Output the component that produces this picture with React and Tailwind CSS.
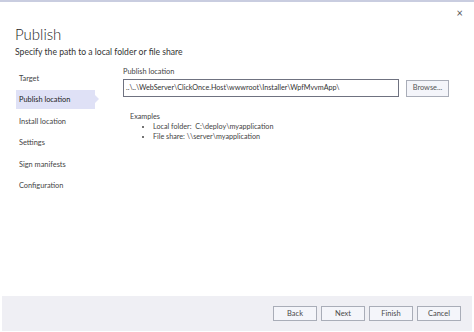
import React from 'react';

const navItems = ['Target', 'Publish location', 'Install location', 'Settings', 'Sign manifests', 'Configuration'];

const FooterButton = ({ children }) => (
  <button className="w-[44px] h-[15px] border border-[#a9adb8] bg-[#f4f5fa] text-[7.5px] leading-none text-[#4a4a4a]">
    {children}
  </button>
);

export default function App() {
  return (
    <div className="w-[474px] h-[332px] bg-white flex flex-col font-['Lato',sans-serif] text-[#333] overflow-hidden">
      <div className="h-[2px] bg-[#c9cde0]" />
      <div className="relative px-[15px] pt-[22px] h-[56px]">
        <span className="absolute right-[11px] top-[5px] text-[11px] leading-none text-[#555]">×</span>
        <h1 className="text-[15px] leading-[20px] font-light text-[#1e1e1e]">Publish</h1>
        <p className="text-[8.6px] leading-[12px] mt-[2px] text-[#333]">Specify the path to a local folder or file share</p>
      </div>
      <div className="flex flex-1">
        <nav className="w-[123px] pl-[16px] pt-[11px] flex flex-col gap-[2.4px]">
          {navItems.map((item) => (
            <div key={item} className="relative">
              <div
                className={
                  'h-[19px] w-[79px] pl-[3px] flex items-center text-[7.4px] ' +
                  (item === 'Publish location' ? 'bg-[#dfe1f6] text-[#222]' : 'text-[#444]')
                }
              >
                {item}
              </div>
              {item === 'Publish location' && (
                <div className="absolute left-[79px] top-[5px] w-0 h-0 border-y-[4.5px] border-y-transparent border-l-[4px] border-l-[#dfe1f6]" />
              )}
            </div>
          ))}
        </nav>
        <div className="flex-1 pt-[8px]">
          <div className="text-[7.4px] text-[#444] leading-[11px]">Publish location</div>
          <div className="flex items-center mt-[2px]">
            <div className="w-[276px] h-[18px] border border-[#6f7280] flex items-center px-[2px] text-[7.2px] text-[#333] whitespace-nowrap overflow-hidden">
              ..\..\WebServer\ClickOnce.Host\wwwroot\Installer\WpfMvvmApp\
            </div>
            <button className="ml-[7px] w-[43px] h-[17px] border border-[#a9adb8] bg-[#f4f5fa] text-[7.4px] text-[#555]">
              Browse...
            </button>
          </div>
          <div className="mt-[15px] ml-[7px] text-[7.2px] leading-[10px] text-[#444]">
            <div>Examples</div>
            <ul className="ml-[17px] list-disc pl-[6px]">
              <li>Local folder:&nbsp; C:\deploy\myapplication</li>
              <li>File share: \\server\myapplication</li>
            </ul>
          </div>
        </div>
      </div>
      <div className="h-[35px] mx-[2px] mb-[1px] bg-[#efeff4] flex items-center justify-end gap-[4px] pr-[11px]">
        <FooterButton>Back</FooterButton>
        <FooterButton>Next</FooterButton>
        <FooterButton>Finish</FooterButton>
        <FooterButton>Cancel</FooterButton>
      </div>
    </div>
  );
}
